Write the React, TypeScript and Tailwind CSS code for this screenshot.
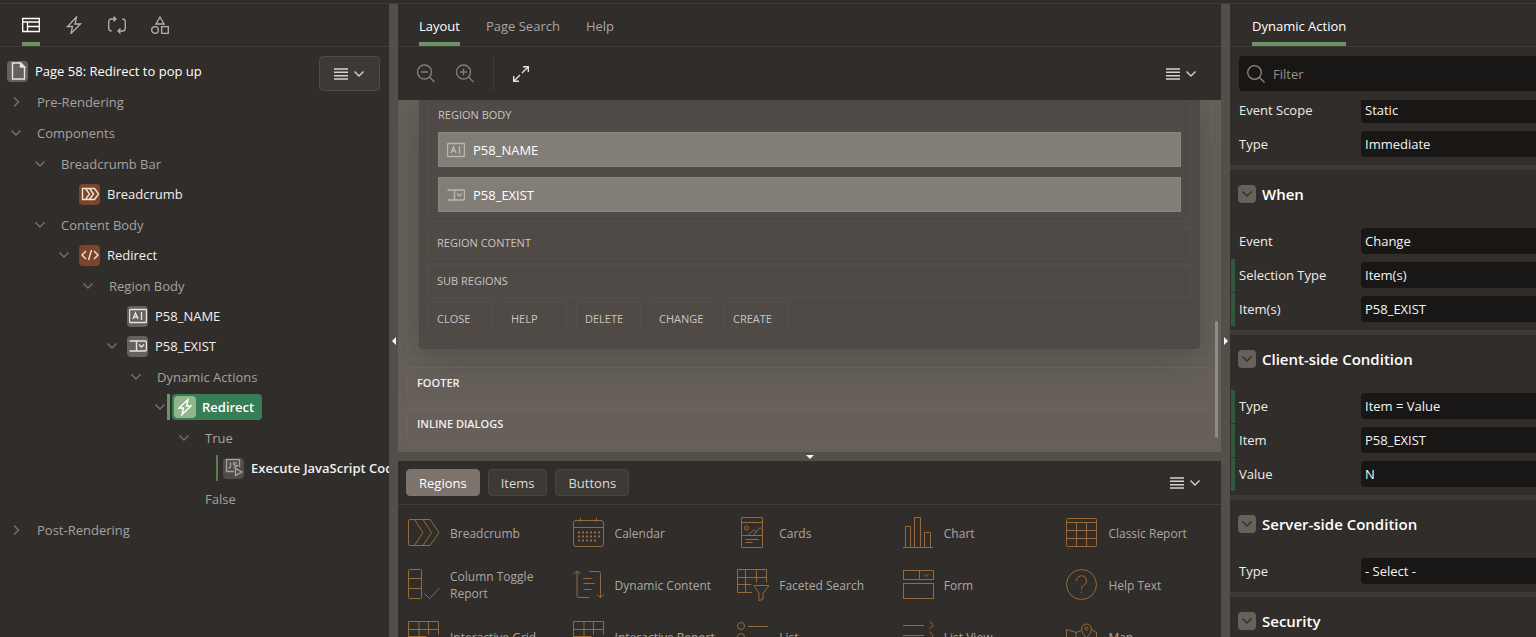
import type { ReactNode } from 'react';

type IconName = keyof typeof smallIcons;

interface TreeNode {
  label: string,
  level: number,
  expanded?: boolean,
  icon?: IconName,
  tone?: 'orange' | 'gray' | 'dark',
  changed?: boolean,
  selected?: boolean,
  bold?: boolean
}

interface Property {
  label: string,
  value: string,
  kind: 'select' | 'text',
  changed?: boolean
}

interface PropertyGroup {
  title?: string,
  properties: Property[]
}

const smallIcons = {
  breadcrumb: <path d="M1.5 3.5h12l4 5.5-4 5.5h-12zM4.5 3.5 8.5 9l-4 5.5M8.5 3.5l4 5.5-4 5.5" />,
  code: <path d="M5 5 1 9l4 4M13 5l4 4-4 4M10.5 4l-3 10" />,
  textField: (
    <>
      <rect x="0.5" y="2.5" width="17" height="13" rx="1" />
      <path d="M4 12l2.5-6L9 12M5 10h3M12.5 5v8" />
    </>
  ),
  selectList: (
    <>
      <path d="M.5 4H16a1.5 1.5 0 0 1 1.5 1.5v7A1.5 1.5 0 0 1 16 14H.5M7.5 4v10" />
      <path d="M10 7.5l2.5 2.5L15 7.5" />
    </>
  ),
  bolt: <path d="M12 1.5 3 10h4.5L6 16.5 15 8h-4.5z" />,
  script: (
    <>
      <path d="M9 12.5H1.5v-12h13V8" />
      <path d="M5.5 3.5v4q0 1.5-2 1.5M11.5 4q-3-1-3 .8t3 1.7-3 2.3" />
      <path d="M10.5 9.5v7L17 13z" />
    </>
  ),
  page: (
    <>
      <path d="M3.5 1h8l4 4v12h-12z" />
      <path d="M11.5 1v4h4z" fill="currentColor" />
    </>
  )
};

const treeNodes: TreeNode[] = [
  { label: 'Pre-Rendering', level: 0, expanded: false },
  { label: 'Components', level: 0, expanded: true },
  { label: 'Breadcrumb Bar', level: 1, expanded: true },
  { label: 'Breadcrumb', level: 2, icon: 'breadcrumb', tone: 'orange' },
  { label: 'Content Body', level: 1, expanded: true },
  { label: 'Redirect', level: 2, expanded: true, icon: 'code', tone: 'orange' },
  { label: 'Region Body', level: 3, expanded: true },
  { label: 'P58_NAME', level: 4, icon: 'textField', tone: 'gray' },
  { label: 'P58_EXIST', level: 4, expanded: true, icon: 'selectList', tone: 'gray' },
  { label: 'Dynamic Actions', level: 5, expanded: true },
  { label: 'Redirect', level: 6, expanded: true, icon: 'bolt', selected: true },
  { label: 'True', level: 7, expanded: true },
  { label: 'Execute JavaScript Code', level: 8, icon: 'script', tone: 'dark', changed: true, bold: true },
  { label: 'False', level: 7 },
  { label: 'Post-Rendering', level: 0, expanded: false }
];

const propertyGroups: PropertyGroup[] = [
  {
    properties: [
      { label: 'Event Scope', value: 'Static', kind: 'select' },
      { label: 'Type', value: 'Immediate', kind: 'select' }
    ]
  },
  {
    title: 'When',
    properties: [
      { label: 'Event', value: 'Change', kind: 'select' },
      { label: 'Selection Type', value: 'Item(s)', kind: 'select', changed: true },
      { label: 'Item(s)', value: 'P58_EXIST', kind: 'text', changed: true }
    ]
  },
  {
    title: 'Client-side Condition',
    properties: [
      { label: 'Type', value: 'Item = Value', kind: 'select', changed: true },
      { label: 'Item', value: 'P58_EXIST', kind: 'text', changed: true },
      { label: 'Value', value: 'N', kind: 'text', changed: true }
    ]
  },
  {
    title: 'Server-side Condition',
    properties: [{ label: 'Type', value: '- Select -', kind: 'select' }]
  },
  { title: 'Security', properties: [] }
];

const gridIcon = <path d="M.5.5h30v13M.5.5v30h18M.5 8.5h30M11 .5v30M20.5.5v13M.5 15.5h18" />;

const galleryItems: { label: string, icon: ReactNode }[] = [
  {
    label: 'Breadcrumb',
    icon: <path d="M2 2.5h20l9 13-9 13H2A1.5 1.5 0 0 1 .5 27V4A1.5 1.5 0 0 1 2 2.5zM6.5 2.5l8.5 13-8.5 13M15 2.5l8.5 13-8.5 13" />
  },
  {
    label: 'Calendar',
    icon: (
      <>
        <rect x="0.5" y="3.5" width="30" height="26" rx="2.5" />
        <path d="M.5 10.5h30M7.5 1v4M23.5 1v4" />
        <path d="M5 15.5h22M5 19.5h22M5 23.5h18" strokeWidth="2" strokeDasharray="2 2" />
      </>
    )
  },
  {
    label: 'Cards',
    icon: (
      <>
        <rect x="4.5" y="0.5" width="21" height="30" rx="0.5" />
        <path d="M4.5 5.5h21M4.5 18.5h21M8.5 22.5h13M8.5 25.5h7M11 18.5l6-6 3 3M16 18.5l7-8 2.5 2.5" />
        <circle cx="9.5" cy="11" r="2" />
      </>
    )
  },
  {
    label: 'Chart',
    icon: <path d="M1 30.5h30M3.5 30.5V9.5h5v21M12.5 30.5V.5h6v30M22.5 30.5v-15h6v15" />
  },
  {
    label: 'Classic Report',
    icon: (
      <>
        <rect x="0.5" y="1.5" width="30" height="28" rx="1" />
        <path d="M.5 5.5h30M.5 13.5h30M.5 21.5h30M10.5 5.5v24M20.5 5.5v24" />
      </>
    )
  },
  {
    label: 'Column Toggle Report',
    icon: (
      <>
        <rect x="0.5" y="0.5" width="13" height="29" rx="1" />
        <path d="M.5 9.5h13M.5 19.5h13M16.5 24.5l5 5 10-10.5" />
      </>
    )
  },
  {
    label: 'Dynamic Content',
    icon: <path d="M.5 5 4 2l3.5 3M4 2v24.5a2 2 0 0 0 2 2h10M16 2.5h9.5a2 2 0 0 1 2 2v24M24 25.5l3.5 3 3.5-3M10.5 9.5h8M10.5 14.5h11M10.5 20.5h8" />
  },
  {
    label: 'Faceted Search',
    icon: <path d="M15 23.5H.5V.5h29v13M.5 8.5h29M.5 15.5h14M8.5.5v23M19.5.5v13M17 16.5h15l-6 8V30l-4 2v-7.5z" />
  },
  {
    label: 'Form',
    icon: (
      <>
        <rect x="1.5" y="1.5" width="30" height="9" />
        <rect x="1.5" y="14.5" width="30" height="15" />
        <path d="M17.5 1.5v9M22 5l2.3 2.5L26.5 5" />
      </>
    )
  },
  {
    label: 'Help Text',
    icon: (
      <>
        <circle cx="15.5" cy="15.5" r="15" />
        <path d="M10.5 12a5 5 0 1 1 7.5 4.200q-2.5 1.300-2.5 3.300v1M15.5 22.5v1.5" />
      </>
    )
  },
  { label: 'Interactive Grid', icon: gridIcon },
  { label: 'Interactive Report', icon: gridIcon },
  {
    label: 'List',
    icon: (
      <>
        <circle cx="4" cy="5" r="3.5" />
        <circle cx="4" cy="16" r="3.5" />
        <circle cx="4" cy="27" r="3.5" />
        <path d="M11 5.5h20M11 16.5h20M11 27.5h20" />
      </>
    )
  },
  {
    label: 'List View',
    icon: <path d="M1 4.5h21M1 14.5h21M1 24.5h21M27.5.5l4 3.5-4 4M27.5 11l4 3.5-4 4M27.5 21l4 3.5-4 4" />
  },
  {
    label: 'Map',
    icon: (
      <>
        <path d="M15 9.5 10 11.5.5 8.5v19l9.5 3 10.5-3 10 3v-19L26 9M10 11.5v19" />
        <path d="M20.5 17q-5-5-5-9a5 5 0 0 1 10 0q0 4-5 9z" />
        <circle cx="20.5" cy="7.5" r="1.5" />
      </>
    )
  }
];

function SmallIcon({ name }: { name: IconName }) {
  return (
    <svg className="size-[18px] shrink-0" viewBox="0 0 18 18" fill="none" stroke="currentColor" strokeWidth="1.4" aria-hidden="true">
      {smallIcons[name]}
    </svg>
  );
}

function TabIcon({ children }: { children: ReactNode }) {
  return (
    <svg className="size-[18px]" viewBox="0 0 18 18" fill="none" stroke="currentColor" strokeWidth="1.3" aria-hidden="true">
      {children}
    </svg>
  );
}

function Chevron({ open }: { open: boolean }) {
  return (
    <svg className="size-3 shrink-0" viewBox="0 0 12 12" fill="none" stroke="currentColor" strokeWidth="1.4" aria-hidden="true">
      <path d={open ? 'M1.5 3.5 6 8l4.500-4.500' : 'M4 1.500 8.500 6 4 10.500'} />
    </svg>
  );
}

function MenuGlyph() {
  return (
    <span className="flex items-center gap-[5px] text-[#d5d2ce]">
      <svg className="h-3 w-[14px]" viewBox="0 0 14 12" stroke="currentColor" strokeWidth="1.5" aria-hidden="true">
        <path d="M0 1h14M0 4.300h14M0 7.700h14M0 11h14" />
      </svg>
      <Chevron open />
    </span>
  );
}

function TreeRow({ node }: { node: TreeNode }) {
  const tones = {
    orange: 'bg-[#7b452b] text-[#f3e4da]',
    gray: 'bg-[#67615d] text-[#e6e3e0]',
    dark: 'bg-[#514c47] text-[#a5a19d]'
  };

  return (
    <li
      className={`flex shrink-0 items-center whitespace-nowrap ${node.icon ? 'h-[30px]' : 'h-[31px]'}`}
      style={{ paddingLeft: 10 + node.level * 24 }}
    >
      <span className="flex w-3 shrink-0 text-[#77726d]">
        {node.expanded !== undefined && <Chevron open={node.expanded} />}
      </span>
      {!node.icon && <span className="pl-[15px] text-[#a6a29e]">{node.label}</span>}
      {node.selected && node.icon && (
        <span className="flex items-center gap-[2px] pl-px">
          <span className="h-[26px] w-[3px] bg-[#6d9464]" />
          <span className="flex h-[26px] items-center gap-[6px] rounded bg-[#377d55] pl-[2px] pr-2 font-semibold text-white">
            <span className="flex size-[22px] items-center justify-center rounded-sm bg-[#8fb588]">
              <SmallIcon name={node.icon} />
            </span>
            {node.label}
          </span>
        </span>
      )}
      {!node.selected && node.icon && (
        <span className={`flex items-center ${node.changed ? 'pl-[2px]' : 'pl-[9px]'}`}>
          {node.changed && <span className="mr-[5px] h-[26px] w-[2px] bg-[#56804f]" />}
          <span className={`mr-[7px] flex size-[21px] items-center justify-center rounded-sm ${tones[node.tone ?? 'gray']}`}>
            <SmallIcon name={node.icon} />
          </span>
          <span className={`text-[#f2f0ee] ${node.bold ? 'font-semibold' : ''}`}>{node.label}</span>
        </span>
      )}
    </li>
  );
}

function TreePanel() {
  return (
    <section className="flex w-[389px] shrink-0 flex-col overflow-hidden">
      <nav className="flex h-[43px] shrink-0 gap-[25px] border-b border-[#413d39] pl-[22px] text-[#b5b1ad]">
        <button type="button" aria-label="Rendering" className="flex w-[18px] flex-col border-b-4 border-[#6d9464] pt-3 text-white">
          <TabIcon>
            <path d="M.7 2.5h16.600v13H.7zM.7 6h16.600M5.500 6v9.500M5.500 10.500h12" />
          </TabIcon>
        </button>
        <button type="button" aria-label="Dynamic Actions" className="flex w-[18px] flex-col pt-3">
          <TabIcon>
            <path d="M11.5 1 2.5 10.500h5l-1.500 7 9.500-9.500h-5.500z" />
          </TabIcon>
        </button>
        <button type="button" aria-label="Processing" className="flex w-[18px] flex-col pt-3">
          <TabIcon>
            <path d="M8 3H3.500Q.7 3 .7 6v6q0 3 3 3M5.500.5 8 3 5.500 5.500M10 15h4.500q2.800 0 2.800-3V6q0-3-3-3M12.500 12.500 10 15l2.500 2.500" />
          </TabIcon>
        </button>
        <button type="button" aria-label="Shared Components" className="flex w-[18px] flex-col pt-3">
          <TabIcon>
            <path d="M9 1 13 8H5zM10.700 10.700h6.600v6.600h-6.600z" />
            <circle cx="4" cy="14" r="3.3" />
          </TabIcon>
        </button>
      </nav>
      <div className="flex pl-[7px] pr-[9px] pt-[9px]">
        <div className="flex h-[30px] flex-1 items-center gap-[7px] text-white">
          <span className="flex size-[21px] items-center justify-center rounded-sm bg-[#67615d] text-[#e6e3e0]">
            <SmallIcon name="page" />
          </span>
          <h1>Page 58: Redirect to pop up</h1>
        </div>
        <button type="button" aria-label="Tree menu" className="-mb-[6px] flex h-[35px] w-[61px] items-center justify-center rounded-sm border border-[#504b47] bg-[#3d3935]">
          <MenuGlyph />
        </button>
      </div>
      <ul className="flex flex-col">
        {treeNodes.map((node, index) => (
          <TreeRow key={index} node={node} />
        ))}
      </ul>
    </section>
  );
}

function Splitter({ direction }: { direction: 'left' | 'right' | 'down' }) {
  const shapes = {
    left: 'M4 0v8L0 4z',
    right: 'M0 0v8l4-4z',
    down: 'M0 0h8L4 4z'
  };

  return (
    <div className={`flex shrink-0 items-center justify-center bg-[#544f49] ${direction === 'down' ? 'h-[9px]' : 'w-[9px] pt-10'}`}>
      <svg
        className={direction === 'down' ? 'h-1 w-2' : 'h-2 w-1'}
        viewBox={direction === 'down' ? '0 0 8 4' : '0 0 4 8'}
        fill="#f5f4f2"
        aria-hidden="true"
      >
        <path d={shapes[direction]} />
      </svg>
    </div>
  );
}

function LayoutItem({ icon, label }: { icon: IconName, label: string }) {
  return (
    <div className="flex h-[35px] items-center gap-2 border border-[#8a857e] bg-[#827d76] px-2 text-white">
      <span className="flex text-[#bbb7b1]">
        <SmallIcon name={icon} />
      </span>
      {label}
    </div>
  );
}

function LayoutCanvas() {
  const slots = ['CLOSE', 'HELP', 'DELETE', 'CHANGE', 'CREATE'];
  const sections = ['FOOTER', 'INLINE DIALOGS'];

  return (
    <div className="relative flex min-h-0 flex-1 flex-col overflow-hidden bg-[#67605a] px-[9px] text-[11px]">
      <div className="h-[260px] shrink-0 rounded-b border border-t-0 border-dotted border-[#706a64] px-[11px]">
        <div className="h-[249px] rounded-b bg-[#4f4a45] px-[9px] font-medium text-[#c9c5c1] shadow-[0_10px_36px_rgba(64,70,62,0.6)]">
          <div className="flex h-[122px] flex-col border border-t-0 border-dotted border-[#5a554f] px-[9px] pt-[7px]">
            <p className="h-4 leading-4">REGION BODY</p>
            <div className="mt-[9px] flex flex-col gap-[10px] text-[13px]">
              <LayoutItem icon="textField" label="P58_NAME" />
              <LayoutItem icon="selectList" label="P58_EXIST" />
            </div>
          </div>
          <div className="mt-[5px] flex h-8 items-center border border-dotted border-[#5a554f] px-2">REGION CONTENT</div>
          <div className="mt-[5px] flex h-[34px] items-center border border-dotted border-[#5a554f] px-2">SUB REGIONS</div>
          <div className="mt-1 flex gap-[9px]">
            {slots.map((slot) => (
              <div key={slot} className="flex h-[33px] w-[65px] items-center rounded-sm border border-dotted border-[#5a554f] px-2">
                {slot}
              </div>
            ))}
          </div>
        </div>
      </div>
      {sections.map((section) => (
        <div key={section} className="mt-[7px] flex h-[34px] shrink-0 items-center rounded border border-dotted border-[#706a64] px-[9px] pb-[2px] font-semibold text-[#f2f0ee]">
          {section}
        </div>
      ))}
      <div className="absolute bottom-[14px] right-[3px] h-[117px] w-[3px] rounded bg-[#8e8b89]" />
    </div>
  );
}

function LayoutPanel() {
  const tabs = ['Layout', 'Page Search', 'Help'];

  return (
    <section className="flex min-w-0 flex-1 flex-col">
      <nav className="flex h-[43px] shrink-0 gap-[26px] border-b border-[#413d39] pl-[21px]">
        {tabs.map((tab, index) => (
          <button
            key={tab}
            type="button"
            className={`border-b-4 pt-[6px] ${index === 0 ? 'border-[#6d9464] font-medium text-white' : 'border-transparent text-[#aaa6a2]'}`}
          >
            {tab}
          </button>
        ))}
      </nav>
      <div className="flex h-[53px] shrink-0 items-center pl-[18px] pr-6 text-[#827d78]">
        <button type="button" aria-label="Zoom out">
          <svg className="size-5" viewBox="0 0 20 20" fill="none" stroke="currentColor" strokeWidth="1.4" aria-hidden="true">
            <circle cx="8.5" cy="8" r="7" />
            <path d="M5 8h7M13.500 13l5 5" />
          </svg>
        </button>
        <button type="button" aria-label="Zoom in" className="ml-[19px]">
          <svg className="size-5" viewBox="0 0 20 20" fill="none" stroke="currentColor" strokeWidth="1.4" aria-hidden="true">
            <circle cx="8.5" cy="8" r="7" />
            <path d="M5 8h7M8.500 4.500v7M13.500 13l5 5" />
          </svg>
        </button>
        <span className="ml-[18px] h-[34px] w-px bg-[#413d39]" />
        <button type="button" aria-label="Expand" className="ml-[19px] text-[#e4e1de]">
          <svg className="size-4" viewBox="0 0 16 16" fill="none" stroke="currentColor" strokeWidth="1.4" aria-hidden="true">
            <path d="M10 .7h5.300V6M15 1 9 7M6 15.300H.7V10M1 15l6-6" />
          </svg>
        </button>
        <button type="button" aria-label="Layout menu" className="ml-auto">
          <MenuGlyph />
        </button>
      </div>
      <LayoutCanvas />
      <Splitter direction="down" />
      <Gallery />
    </section>
  );
}

function Gallery() {
  const tabs = ['Regions', 'Items', 'Buttons'];

  return (
    <div className="h-[176px] shrink-0 overflow-hidden">
      <div className="flex h-11 items-center gap-2 border-b border-[#413d39] pl-2 pr-5">
        {tabs.map((tab, index) => (
          <button
            key={tab}
            type="button"
            className={`h-[27px] rounded-sm border px-3 ${index === 0 ? 'border-[#7b736c] bg-[#7b736c] text-white' : 'border-[#4b4642] bg-[#3d3935] text-[#dcd9d6]'}`}
          >
            {tab}
          </button>
        ))}
        <button type="button" aria-label="Gallery menu" className="ml-auto">
          <MenuGlyph />
        </button>
      </div>
      <ul className="grid grid-cols-5 pt-[2px] text-xs leading-[17px] text-[#aba7a3]">
        {galleryItems.map((item) => (
          <li key={item.label} className="flex h-[52px] items-center gap-[10px] pl-[10px]">
            <svg className="size-8 shrink-0 text-[#966a3c]" viewBox="0 0 32 32" fill="none" stroke="currentColor" aria-hidden="true">
              {item.icon}
            </svg>
            <span className="max-w-[110px]">{item.label}</span>
          </li>
        ))}
      </ul>
    </div>
  );
}

function PropertyRow({ property, id }: { property: Property, id: string }) {
  const fieldClass = 'h-[26px] min-w-0 flex-1 appearance-none rounded-l-sm bg-[#191715] px-1 text-[#f5f4f2] outline-none';

  return (
    <div className="flex h-[34px] items-center">
      <span className={`ml-px h-[33px] w-1 shrink-0 ${property.changed ? 'bg-[#31573f]' : ''}`} />
      <label htmlFor={id} className="w-[126px] shrink-0 pl-1 text-[#eeece9]">{property.label}</label>
      {property.kind === 'select' ? (
        <select id={id} className={fieldClass} defaultValue={property.value}>
          <option>{property.value}</option>
        </select>
      ) : (
        <input id={id} type="text" className={fieldClass} defaultValue={property.value} />
      )}
    </div>
  );
}

function PropertyPanel() {
  return (
    <section className="flex w-[306px] shrink-0 flex-col overflow-hidden">
      <nav className="flex h-[43px] shrink-0 border-b border-[#413d39] pl-[22px]">
        <button type="button" className="border-b-4 border-[#6d9464] pt-[6px] font-medium text-white">Dynamic Action</button>
      </nav>
      <div className="shrink-0 pb-[9px] pl-[9px] pt-[9px]">
        <label className="flex h-[35px] items-center gap-2 rounded-l-sm bg-[#191715] pl-2 text-[#8d8984]">
          <svg className="size-[18px] shrink-0" viewBox="0 0 18 18" fill="none" stroke="currentColor" strokeWidth="1.3" aria-hidden="true">
            <circle cx="7.5" cy="7.5" r="6.8" />
            <path d="M12.500 12.500 17.500 17.500" />
          </svg>
          <input type="search" placeholder="Filter" aria-label="Filter" className="min-w-0 flex-1 bg-transparent outline-none placeholder:text-[#94908b]" />
        </label>
      </div>
      <div className="min-h-0 flex-1 overflow-hidden">
        <div className="-mt-[7px]">
          {propertyGroups.map((group, groupIndex) => (
            <div key={groupIndex} className={`pb-1 ${group.title ? 'border-t-[5px] border-[#3d3935]' : ''}`}>
              {group.title && (
                <h2 className="mb-[6px] flex h-12 items-center gap-[6px] pl-2 text-[15px] font-semibold text-white">
                  <button type="button" aria-label={`Collapse ${group.title}`} className="flex size-[18px] items-center justify-center rounded-sm bg-[#67615d] text-[#312d2a]">
                    <Chevron open />
                  </button>
                  {group.title}
                </h2>
              )}
              {group.properties.map((property, index) => (
                <PropertyRow key={property.label} property={property} id={`property-${groupIndex}-${index}`} />
              ))}
            </div>
          ))}
        </div>
      </div>
    </section>
  );
}

function App() {
  return (
    <div className="flex h-screen flex-col overflow-hidden bg-[#312d2a] font-['Open_Sans','Noto_Sans',sans-serif] text-[13px] leading-5">
      <div className="h-1 shrink-0 border-b border-[#413d39]" />
      <main className="flex min-h-0 flex-1">
        <TreePanel />
        <Splitter direction="left" />
        <LayoutPanel />
        <Splitter direction="right" />
        <PropertyPanel />
      </main>
    </div>
  );
}

export default App;
